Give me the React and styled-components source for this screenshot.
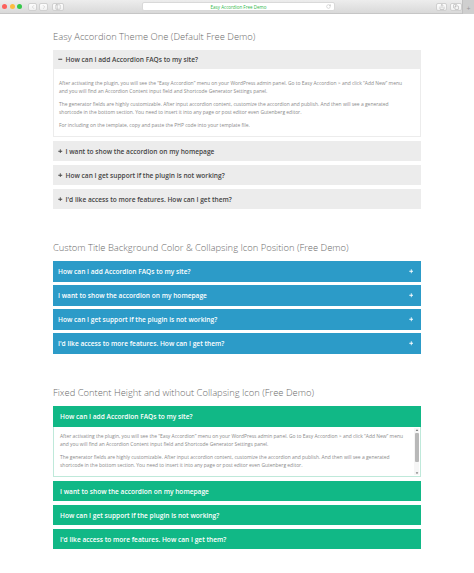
import React from "react";
import styled, { createGlobalStyle, css } from "styled-components";
import { FaPlus, FaMinus, FaCaretUp, FaCaretDown } from "react-icons/fa";
import { ChevronLeft, ChevronRight, RotateCw, Share, Copy, PanelLeft } from "lucide-react";

const GlobalStyle = createGlobalStyle`
  body {
    margin: 0;
    background: #ffffff;
    font-family: "Open Sans", "Liberation Sans", sans-serif;
  }
`;

const Window = styled.div`
  width: 474px;
  min-height: 573px;
  background: #fff;
`;

const Toolbar = styled.div`
  height: 14px;
  display: flex;
  align-items: center;
  background: linear-gradient(#ededed, #d9d9d9);
  border-bottom: 1px solid #c6c6c6;
  box-sizing: border-box;
  padding-left: 2px;
`;

const Lights = styled.div`
  display: flex;
  gap: 2.5px;
`;

const Light = styled.span`
  width: 5px;
  height: 5px;
  border-radius: 50%;
  background: ${(p) => p.color};
`;

const ChromeButton = styled.div`
  width: ${(p) => p.w || 9}px;
  height: 8px;
  margin-left: ${(p) => p.ml || 0}px;
  background: linear-gradient(#fdfdfd, #f1f1f1);
  border: 1px solid #d0d0d0;
  border-radius: 2px;
  display: flex;
  align-items: center;
  justify-content: center;
  color: #bbb;
  box-sizing: border-box;
`;

const UrlBar = styled.div`
  margin-left: 78px;
  width: 193px;
  height: 9px;
  background: #fff;
  border: 1px solid #d9d9d9;
  border-radius: 2px;
  box-sizing: border-box;
  position: relative;
  display: flex;
  align-items: center;
  justify-content: center;
  font-size: 4.5px;
  color: #2fb84a;
`;

const Reload = styled.span`
  position: absolute;
  right: 3px;
  top: 1px;
  color: #999;
  display: flex;
`;

const NewTab = styled.div`
  margin-left: auto;
  width: 11px;
  height: 14px;
  background: #cfcfcf;
  border-left: 1px solid #c0c0c0;
  display: flex;
  align-items: flex-end;
  justify-content: center;
  color: #999;
  font-size: 7px;
  line-height: 10px;
`;

const Page = styled.div`
  padding: 16px 53px 20px;
`;

const Section = styled.section`
  margin-bottom: 32px;
`;

const SectionTitle = styled.h2`
  margin: 0 0 6px;
  font-size: 9.4px;
  font-weight: 300;
  line-height: 14px;
  color: #6b6b6b;
`;

const Accordion = styled.div`
  display: flex;
  flex-direction: column;
  gap: ${(p) => p.gap}px;
`;

const themes = {
  gray: css`
    background: #ececec;
    color: #444;
  `,
  blue: css`
    background: #2c9bc8;
    color: #fff;
  `,
  green: css`
    background: #11b886;
    color: #fff;
  `,
};

const Header = styled.div`
  height: ${(p) => p.h || 20}px;
  display: flex;
  align-items: center;
  gap: 3px;
  padding: 0 ${(p) => (p.wide ? 7 : 5)}px;
  font-size: 6.6px;
  font-weight: 600;
  ${(p) => themes[p.variant]};
`;

const Label = styled.span`
  flex: 1;
`;

const Icon = styled.span`
  display: flex;
  font-size: 4.5px;
  margin-right: ${(p) => (p.right ? 3 : 0)}px;
`;

const Body = styled.div`
  border: 1px solid ${(p) => p.border};
  border-top: none;
  padding: ${(p) => p.pad};
  font-size: 4.95px;
  line-height: 8px;
  color: #8a8a8a;
`;

const ScrollBox = styled.div`
  position: relative;
  height: 50px;
  overflow: hidden;
  box-sizing: border-box;
  border: 1px solid #bfe9da;
  border-top: none;
`;

const ScrollContent = styled(Body)`
  border: none;
  height: 100%;
  box-sizing: border-box;
  overflow: hidden;
`;

const ScrollTrack = styled.div`
  position: absolute;
  top: 1px;
  right: 1px;
  bottom: 1px;
  width: 5px;
  background: #f6f6f6;
  display: flex;
  flex-direction: column;
  align-items: center;
  color: #555;
  font-size: 4px;
`;

const Thumb = styled.div`
  width: 4px;
  height: 29px;
  margin: 1px 0 auto;
  background: #b8b8b8;
  border-radius: 1px;
`;

const Para = styled.p`
  margin: 0 0 5px;
  &:last-child {
    margin-bottom: 0;
  }
`;

const questions = [
  "How can I add Accordion FAQs to my site?",
  "I want to show the accordion on my homepage",
  "How can I get support if the plugin is not working?",
  "I'd like access to more features. How can I get them?",
];

const answer = [
  "After activating the plugin, you will see the \u201cEasy Accordion\u201d menu on your WordPress admin panel. Go to Easy Accordion > and click \u201cAdd New\u201d menu and you will find an Accordion Content input field and Shortcode Generator Settings panel.",
  "The generator fields are highly customizable. After input accordion content, customize the accordion and publish. And then will see a generated shortcode in the bottom section. You need to insert it into any page or post editor even Gutenberg editor.",
  "For including on the template, copy and paste the PHP code into your template file.",
];

function ThemeOne() {
  return (
    <Section>
      <SectionTitle>Easy Accordion Theme One (Default Free Demo)</SectionTitle>
      <Accordion gap={4}>
        <div>
          <Header variant="gray" h={19}>
            <Icon>
              <FaMinus />
            </Icon>
            <Label>{questions[0]}</Label>
          </Header>
          <Body border="#ececec" pad="10px 10px 7px 5px">
            {answer.map((t) => (
              <Para key={t}>{t}</Para>
            ))}
          </Body>
        </div>
        {questions.slice(1).map((q) => (
          <Header key={q} variant="gray">
            <Icon>
              <FaPlus />
            </Icon>
            <Label>{q}</Label>
          </Header>
        ))}
      </Accordion>
    </Section>
  );
}

function ThemeTwo() {
  return (
    <Section>
      <SectionTitle>Custom Title Background Color &amp; Collapsing Icon Position (Free Demo)</SectionTitle>
      <Accordion gap={3}>
        {questions.map((q) => (
          <Header key={q} variant="blue" h={21}>
            <Label>{q}</Label>
            <Icon right>
              <FaPlus />
            </Icon>
          </Header>
        ))}
      </Accordion>
    </Section>
  );
}

function ThemeThree() {
  return (
    <Section>
      <SectionTitle>Fixed Content Height and without Collapsing Icon (Free Demo)</SectionTitle>
      <Accordion gap={4}>
        <div>
          <Header variant="green" h={21} wide>
            <Label>{questions[0]}</Label>
          </Header>
          <ScrollBox>
            <ScrollContent pad="5px 14px 5px 6px">
              {answer.map((t) => (
                <Para key={t}>{t}</Para>
              ))}
            </ScrollContent>
            <ScrollTrack>
              <FaCaretUp />
              <Thumb />
              <FaCaretDown />
            </ScrollTrack>
          </ScrollBox>
        </div>
        {questions.slice(1).map((q) => (
          <Header key={q} variant="green" wide>
            <Label>{q}</Label>
          </Header>
        ))}
      </Accordion>
    </Section>
  );
}

export default function App() {
  return (
    <Window>
      <GlobalStyle />
      <Toolbar>
        <Lights>
          <Light color="#fc605c" />
          <Light color="#fdbc40" />
          <Light color="#34c84a" />
        </Lights>
        <ChromeButton ml={6}>
          <ChevronLeft size={6} strokeWidth={2} />
        </ChromeButton>
        <ChromeButton ml={2}>
          <ChevronRight size={6} strokeWidth={2} />
        </ChromeButton>
        <ChromeButton ml={4} w={12}>
          <PanelLeft size={6} strokeWidth={1.5} color="#999" />
        </ChromeButton>
        <UrlBar>
          Easy Accordion Free Demo
          <Reload>
            <RotateCw size={5} strokeWidth={1.5} />
          </Reload>
        </UrlBar>
        <ChromeButton ml={101} w={11}>
          <Share size={6} strokeWidth={1.5} color="#888" />
        </ChromeButton>
        <ChromeButton ml={3} w={12}>
          <Copy size={6} strokeWidth={1.5} color="#888" />
        </ChromeButton>
        <NewTab>+</NewTab>
      </Toolbar>
      <Page>
        <ThemeOne />
        <ThemeTwo />
        <ThemeThree />
      </Page>
    </Window>
  );
}
